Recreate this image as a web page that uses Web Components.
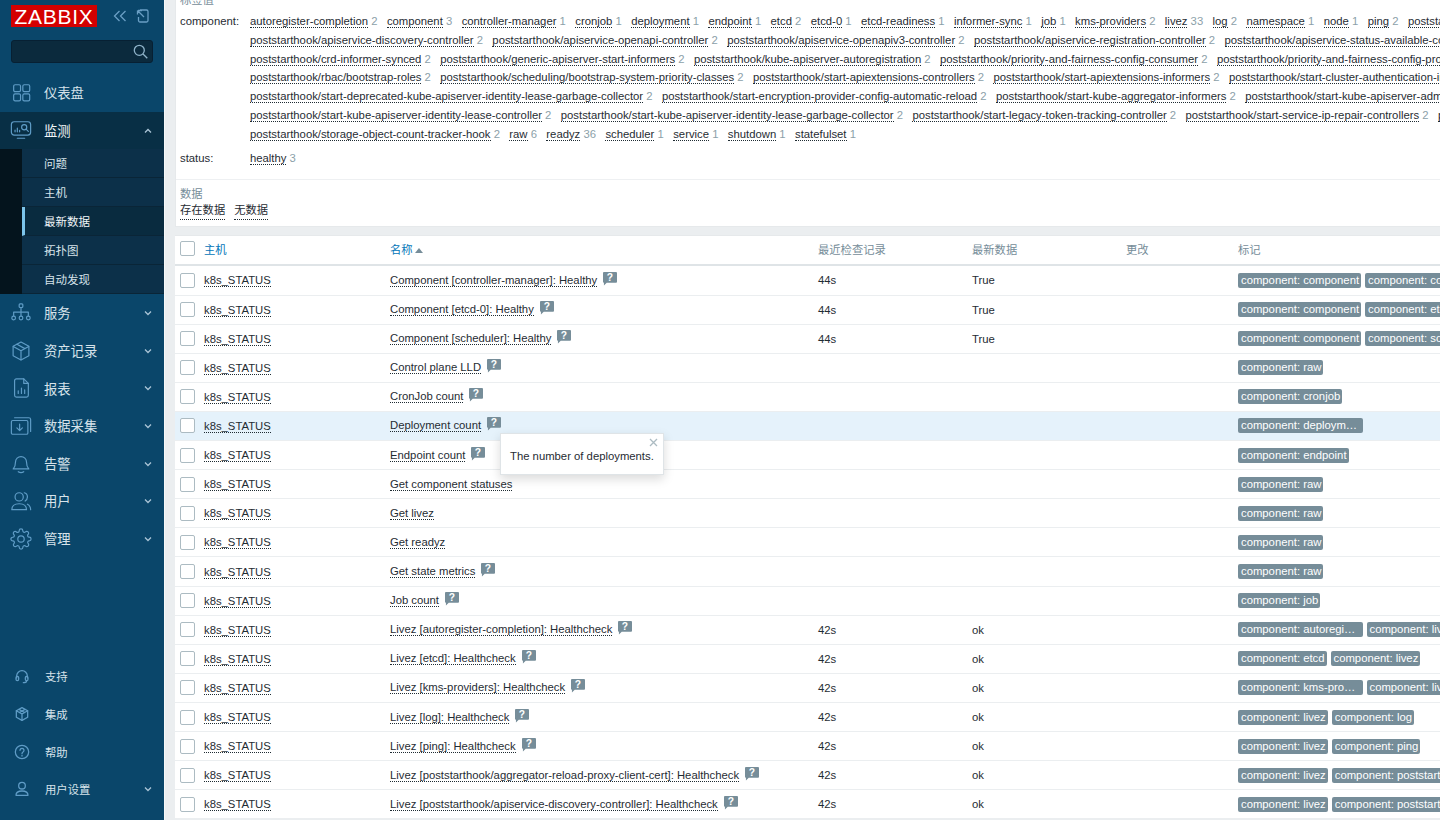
<!DOCTYPE html>
<html>
<head>
<meta charset="utf-8">
<title>Zabbix</title>
<style>
  html, body { margin: 0; padding: 0; height: 820px; overflow: hidden; background: #ebeef0; }
  body { display: flex; font: 11.3px "Liberation Sans", "Noto Sans CJK SC", Arial, sans-serif; color: #1f2c33; }
</style>
</head>
<body>
<z-sidebar></z-sidebar>
<z-main>
  <z-filter></z-filter>
  <z-table></z-table>
  <z-hint>The number of deployments.</z-hint>
</z-main>

<script>
const FONT = `"Liberation Sans", "Noto Sans CJK SC", Arial, sans-serif`;

const ICONS = {
  dashboard: `<rect x="4" y="3" width="7.5" height="7.5" rx="1.5"/><rect x="14" y="3" width="7.5" height="7.5" rx="1.5"/><rect x="4" y="13" width="7.5" height="7.5" rx="1.5"/><rect x="14" y="13" width="7.5" height="7.5" rx="1.5"/>`,
  monitor: `<rect x="1.5" y="3" width="21" height="14.5" rx="3"/><path d="M8 21h8M5.5 14v-2M8 14v-4M10.5 14v-1.5"/><circle cx="15.5" cy="9" r="2.8"/><path d="M17.5 11l2.5 2.5"/>`,
  services: `<rect x="10" y="2" width="4" height="4" rx="1"/><path d="M12 6v5M4 15v-4h16v4M12 11v4"/><rect x="2" y="15.5" width="4" height="4" rx="2"/><rect x="10" y="15.5" width="4" height="4" rx="2"/><rect x="18" y="15.5" width="4" height="4" rx="2"/>`,
  box: `<path d="M12 2.2l8.6 4.7v10.2L12 21.8l-8.6-4.7V6.9z"/><path d="M3.6 7l8.4 4.8L20.4 7M12 11.8v9.8M7.6 4.6l8.6 4.8"/>`,
  report: `<path d="M7 2h8l5 5v13a2 2 0 0 1-2 2H7a2 2 0 0 1-2-2V4a2 2 0 0 1 2-2z"/><path d="M15 2v5h5M9 18v-3M12.5 18v-6M16 18v-4"/>`,
  collect: `<rect x="1.5" y="6" width="18" height="15" rx="1.5"/><path d="M5 3h15.5A2 2 0 0 1 22.5 5v13M10.5 10v7M7.5 14l3 3 3-3"/>`,
  bell: `<path d="M3.5 18.5c2-2 2.5-3.5 2.5-7.5a6 6 0 0 1 12 0c0 4 .5 5.5 2.5 7.5z"/><path d="M9 21.5c1.5 1 4.5 1 6 0"/>`,
  users: `<circle cx="10" cy="7.5" r="4.5"/><path d="M2 21.5c0-4 3-6.5 8-6.5s8 2.5 8 6.5zM15.5 3c2.5.5 3.5 2.5 3.5 4.5s-1 3.5-2.5 4.5M19 15.5c2 1 3.5 3 3.5 6"/>`,
  gear: `<circle cx="12" cy="12" r="3.5"/><path d="M19.4 15a1.65 1.65 0 0 0 .33 1.82l.06.06a2 2 0 0 1 0 2.83 2 2 0 0 1-2.83 0l-.06-.06a1.65 1.65 0 0 0-1.82-.33 1.65 1.65 0 0 0-1 1.51V21a2 2 0 0 1-2 2 2 2 0 0 1-2-2v-.09A1.65 1.65 0 0 0 9 19.4a1.65 1.65 0 0 0-1.82.33l-.06.06a2 2 0 0 1-2.83 0 2 2 0 0 1 0-2.83l.06-.06a1.65 1.65 0 0 0 .33-1.82 1.65 1.65 0 0 0-1.51-1H3a2 2 0 0 1-2-2 2 2 0 0 1 2-2h.09A1.65 1.65 0 0 0 4.6 9a1.65 1.65 0 0 0-.33-1.82l-.06-.06a2 2 0 0 1 0-2.83 2 2 0 0 1 2.83 0l.06.06a1.65 1.65 0 0 0 1.82.33H9a1.65 1.65 0 0 0 1-1.51V3a2 2 0 0 1 2-2 2 2 0 0 1 2 2v.09a1.65 1.65 0 0 0 1 1.51 1.65 1.65 0 0 0 1.82-.33l.06-.06a2 2 0 0 1 2.83 0 2 2 0 0 1 0 2.83l-.06.06a1.65 1.65 0 0 0-.33 1.82V9a1.65 1.65 0 0 0 1.51 1H21a2 2 0 0 1 2 2 2 2 0 0 1-2 2h-.09a1.65 1.65 0 0 0-1.51 1z"/>`,
  headset: `<path d="M4 15v-3a8 8 0 0 1 16 0v3"/><rect x="3" y="12.5" width="4" height="6.5" rx="2"/><rect x="17" y="12.5" width="4" height="6.5" rx="2"/><path d="M19 19c0 2-2 3-5 3"/>`,
  cube: `<path d="M12 2.5l8.5 4.7v9.6L12 21.5l-8.5-4.7V7.2z"/><path d="M3.5 7.2L12 12l8.5-4.8M12 12v9.5M7.5 5l8.5 4.8M16.5 5L8 9.8"/>`,
  help: `<circle cx="12" cy="12" r="10"/><path d="M9 9.5a3 3 0 1 1 4.5 2.6c-1 .6-1.5 1.2-1.5 2.4M12 17v1"/>`,
  user: `<circle cx="12" cy="7" r="5"/><path d="M3 21.5c0-4.5 3-6.5 9-6.5s9 2 9 6.5z"/>`
};

class ZNavItem extends HTMLElement {
  constructor() {
    super();
    this.attachShadow({mode: "open"});
  }
  connectedCallback() {
    const small = this.hasAttribute("small");
    const size = small ? 16 : 22;
    const open = this.hasAttribute("open");
    let chevron = "";
    if (this.hasAttribute("chevron")) {
      chevron = `<svg class="chev" width="8" height="6" viewBox="0 0 8 6"><path d="${open ? "M1 4.5l3-3 3 3" : "M1 1.5l3 3 3-3"}"/></svg>`;
    }
    this.shadowRoot.innerHTML = `
      <style>
        :host { display: flex; align-items: center; height: 37.6px; position: relative; color: #d7e3ea; flex: none; }
        :host([open]) { background: #082f45; color: #f2f6f8; }
        .ico { width: 44px; flex: none; display: flex; justify-content: center; padding-right: ${small ? 0 : 3}px; box-sizing: border-box; }
        .ico svg { fill: none; stroke: #5f9cc6; stroke-width: ${small ? 1.9 : 1.3}; stroke-linecap: round; stroke-linejoin: round; }
        .chev { position: absolute; left: 144px; top: 16px; fill: none; stroke: #a9c4d6; stroke-width: 1.3; }
        .t { font-size: 13.3px; }
        :host([small]) .t { font-size: 11.33px; padding-left: 1px; }
      </style>
      <span class="ico"><svg width="${size}" height="${size}" viewBox="0 0 24 24">${ICONS[this.getAttribute("icon")]}</svg></span>
      <span class="t"><slot></slot></span>
      ${chevron}`;
  }
}
customElements.define("z-nav-item", ZNavItem);

class ZSubItem extends HTMLElement {
  constructor() {
    super();
    this.attachShadow({mode: "open"}).innerHTML = `
      <style>
        :host { display: flex; align-items: center; height: 29px; box-sizing: border-box; padding-left: 22px; background: #0c3049; border-bottom: 1px solid #0a2537; color: #d7e3ea; font-size: 11.5px; }
        :host([active]) { background: #092b3f; color: #f2f6f8; border-left: 3px solid #7cc4ea; padding-left: 19px; }
      </style>
      <slot></slot>`;
  }
}
customElements.define("z-sub-item", ZSubItem);

class ZSidebar extends HTMLElement {
  constructor() {
    super();
    this.attachShadow({mode: "open"}).innerHTML = `
      <style>
        :host { display: flex; flex-direction: column; width: 164px; height: 820px; flex: none; background: #0a466a; border-right: 1px solid #f6f8f9; box-sizing: content-box; font-family: ${FONT}; }
        .top { display: flex; align-items: center; padding: 5px 0 0 11px; height: 22px; }
        .logo { width: 86px; height: 22px; background: #d40000; color: #fff; font-size: 21px; line-height: 23px; text-align: center; letter-spacing: .7px; overflow: hidden; }
        .top svg { fill: none; stroke: #6a9fc5; stroke-width: 1.3; margin-left: 16px; }
        .top svg + svg { margin-left: 9px; }
        .search { margin: 13px 0 11px 11px; width: 142px; height: 23px; box-sizing: border-box; background: #0b2a3d; border: 1px solid #072033; border-radius: 3px; display: flex; justify-content: flex-end; align-items: center; padding-right: 4px; }
        .search svg { fill: none; stroke: #8fb3c9; stroke-width: 1.3; }
        .sub { display: flex; flex-direction: column; background: #04141d; padding-left: 22px; }
        .grow { flex: 1; }
        .bottom { padding-bottom: 12px; }
      </style>
      <div class="top">
        <div class="logo">ZABBIX</div>
        <svg width="14" height="14" viewBox="0 0 14 14"><path d="M6.5 2L1.5 7l5 5M12.5 2l-5 5 5 5"/></svg>
        <svg width="13" height="14" viewBox="0 0 13 14"><path d="M4 1h6.5A1.5 1.5 0 0 1 12 2.5v9a1.5 1.5 0 0 1-1.5 1.5H4A1.5 1.5 0 0 1 2.5 11.5V8M1.5 1.5L8 8M2 1.5h4M1.5 1.5v4"/></svg>
      </div>
      <div class="search"><svg width="15" height="15" viewBox="0 0 15 15"><circle cx="6.3" cy="6.3" r="5"/><path d="M10 10l4.3 4.3"/></svg></div>
      <z-nav-item icon="dashboard">仪表盘</z-nav-item>
      <z-nav-item icon="monitor" chevron open>监测</z-nav-item>
      <div class="sub">
        <z-sub-item>问题</z-sub-item>
        <z-sub-item>主机</z-sub-item>
        <z-sub-item active>最新数据</z-sub-item>
        <z-sub-item>拓扑图</z-sub-item>
        <z-sub-item>自动发现</z-sub-item>
      </div>
      <z-nav-item icon="services" chevron>服务</z-nav-item>
      <z-nav-item icon="box" chevron>资产记录</z-nav-item>
      <z-nav-item icon="report" chevron>报表</z-nav-item>
      <z-nav-item icon="collect" chevron>数据采集</z-nav-item>
      <z-nav-item icon="bell" chevron>告警</z-nav-item>
      <z-nav-item icon="users" chevron>用户</z-nav-item>
      <z-nav-item icon="gear" chevron>管理</z-nav-item>
      <div class="grow"></div>
      <div class="bottom">
        <z-nav-item small icon="headset">支持</z-nav-item>
        <z-nav-item small icon="cube">集成</z-nav-item>
        <z-nav-item small icon="help">帮助</z-nav-item>
        <z-nav-item small icon="user" chevron>用户设置</z-nav-item>
      </div>`;
  }
}
customElements.define("z-sidebar", ZSidebar);

class ZMain extends HTMLElement {
  constructor() {
    super();
    this.attachShadow({mode: "open"}).innerHTML = `
      <style>
        :host { display: flex; flex-direction: column; flex: 1; min-width: 0; height: 820px; overflow: hidden; position: relative; padding-left: 10px; gap: 8px; box-sizing: border-box; }
      </style>
      <slot></slot>`;
  }
}
customElements.define("z-main", ZMain);

const P = "poststarthook/";
const SUBFILTER = [
  [["autoregister-completion",2],["component",3],["controller-manager",1],["cronjob",1],["deployment",1],["endpoint",1],["etcd",2],["etcd-0",1],["etcd-readiness",1],["informer-sync",1],["job",1],["kms-providers",2],["livez",33],["log",2],["namespace",1],["node",1],["ping",2],[P+"aggregator-reload-proxy-client-cert",2]],
  [[P+"apiservice-discovery-controller",2],[P+"apiservice-openapi-controller",2],[P+"apiservice-openapiv3-controller",2],[P+"apiservice-registration-controller",2],[P+"apiservice-status-available-controller",2]],
  [[P+"crd-informer-synced",2],[P+"generic-apiserver-start-informers",2],[P+"kube-apiserver-autoregistration",2],[P+"priority-and-fairness-config-consumer",2],[P+"priority-and-fairness-config-producer",2]],
  [[P+"rbac/bootstrap-roles",2],[P+"scheduling/bootstrap-system-priority-classes",2],[P+"start-apiextensions-controllers",2],[P+"start-apiextensions-informers",2],[P+"start-cluster-authentication-info-controller",2]],
  [[P+"start-deprecated-kube-apiserver-identity-lease-garbage-collector",2],[P+"start-encryption-provider-config-automatic-reload",2],[P+"start-kube-aggregator-informers",2],[P+"start-kube-apiserver-admission-initializer",2]],
  [[P+"start-kube-apiserver-identity-lease-controller",2],[P+"start-kube-apiserver-identity-lease-garbage-collector",2],[P+"start-legacy-token-tracking-controller",2],[P+"start-service-ip-repair-controllers",2],[P+"start-system-namespaces-controller",2]],
  [[P+"storage-object-count-tracker-hook",2],["raw",6],["readyz",36],["scheduler",1],["service",1],["shutdown",1],["statefulset",1]]
];

class ZFilter extends HTMLElement {
  constructor() {
    super();
    this.attachShadow({mode: "open"});
  }
  line(items) {
    return `<div class="line">` + items.map(i => `<span class="it"><a>${i[0]}</a> <i>${i[1]}</i></span>`).join("") + `</div>`;
  }
  connectedCallback() {
    this.shadowRoot.innerHTML = `
      <style>
        :host { display: block; flex: none; margin-top: -8px; background: #fff; border: 1px solid #e6e9eb; border-right: 0; box-sizing: border-box; height: 235px; color: #1f2c33; font-family: ${FONT}; }
        .cap { color: #768d99; line-height: 14px; padding-left: 4px; height: 19px; }
        .grp { display: grid; grid-template-columns: 70px 1fr; padding-left: 4px; margin-bottom: 5px; }
        .line { height: 18.83px; line-height: 18px; white-space: nowrap; overflow: hidden; width: 1200px; }
        .it { margin-right: 9.4px; }
        a { border-bottom: 1px dotted #1f2c33; }
        i { font-style: normal; color: #8c9fa9; }
        .k { line-height: 18px; }
        .sep { border-top: 1px solid #eef0f2; margin-top: 11px; padding: 7px 0 0 4px; }
        .sep .c { color: #768d99; line-height: 14px; }
        .sep .l { display: flex; gap: 9px; margin-top: 3px; }
        .sep .l a { line-height: 13px; display: inline-block; height: 15px; }
      </style>
      <div class="cap">标签值</div>
      <div class="grp"><div class="k">component:</div><div>${SUBFILTER.map(l => this.line(l)).join("")}</div></div>
      <div class="grp" style="margin:0"><div class="k">status:</div><div>${this.line([["healthy",3]])}</div></div>
      <div class="sep">
        <div class="c">数据</div>
        <div class="l"><a>存在数据</a><a>无数据</a></div>
      </div>`;
  }
}
customElements.define("z-filter", ZFilter);

class ZTag extends HTMLElement {
  constructor() {
    super();
    this.attachShadow({mode: "open"}).innerHTML = `
      <style>
        :host { display: inline-block; flex: none; box-sizing: border-box; background: #768d99; color: #fff; height: 15px; line-height: 15px; padding: 0 2px 0 3px; border-radius: 2px; white-space: nowrap; }
        :host([cut]) { width: 124.5px; }
      </style>
      <slot></slot>`;
  }
}
customElements.define("z-tag", ZTag);

const HELP_ICON = `<svg class="help" width="14" height="14" viewBox="0 0 15 15"><path fill="#768d99" d="M1 0h13a1 1 0 0 1 1 1v9.5a1 1 0 0 1-1 1H4L1 14.5V11.5A1 1 0 0 1 0 10.5V1a1 1 0 0 1 1-1z"/><text x="7.5" y="9.8" text-anchor="middle" fill="#fff" font-size="11" font-weight="bold" font-family="Liberation Sans">?</text></svg>`;

class ZRow extends HTMLElement {
  constructor() {
    super();
    this.attachShadow({mode: "open"});
  }
  connectedCallback() {
    const d = this.data;
    const tags = d.tags.map(t => `<z-tag${t.endsWith("…") ? " cut" : ""}>${t}</z-tag>`).join("");
    this.shadowRoot.innerHTML = `
      <style>${ZRow.css}</style>
      <span class="cb"></span>
      <span><a>k8s_STATUS</a></span>
      <span class="name"><a>${d.name}</a>${d.help ? HELP_ICON : ""}</span>
      <span>${d.age || ""}</span>
      <span>${d.val || ""}</span>
      <span></span>
      <span class="tags">${tags}</span>`;
  }
}
ZRow.css = `
  :host { display: grid; grid-template-columns: 24px 186px 428px 154px 154px 112px 1fr; align-items: center; height: 29.11px; box-sizing: border-box; padding-left: 5px; background: #fff; border-bottom: 1px solid #ebeef0; white-space: nowrap; overflow: hidden; }
  :host([hover]) { background: #e5f2fb; }
  .cb { width: 15px; height: 15px; box-sizing: border-box; background: #fff; border: 1px solid #acbbc2; border-radius: 2px; }
  a { border-bottom: 1px dotted #1f2c33; }
  .name { display: flex; align-items: center; }
  .help { margin-left: 6px; margin-top: -3px; }
  .tags { display: flex; gap: 4px; overflow: hidden; }`;
customElements.define("z-row", ZRow);

const CC = "component: component";
const ROWS = [
  {name:"Component [controller-manager]: Healthy",help:1,age:"44s",val:"True",tags:[CC,"component: controller-manager"]},
  {name:"Component [etcd-0]: Healthy",help:1,age:"44s",val:"True",tags:[CC,"component: etcd-0"]},
  {name:"Component [scheduler]: Healthy",help:1,age:"44s",val:"True",tags:[CC,"component: scheduler"]},
  {name:"Control plane LLD",help:1,tags:["component: raw"]},
  {name:"CronJob count",help:1,tags:["component: cronjob"]},
  {name:"Deployment count",help:1,hover:1,tags:["component: deploym…"]},
  {name:"Endpoint count",help:1,tags:["component: endpoint"]},
  {name:"Get component statuses",tags:["component: raw"]},
  {name:"Get livez",tags:["component: raw"]},
  {name:"Get readyz",tags:["component: raw"]},
  {name:"Get state metrics",help:1,tags:["component: raw"]},
  {name:"Job count",help:1,tags:["component: job"]},
  {name:"Livez [autoregister-completion]: Healthcheck",help:1,age:"42s",val:"ok",tags:["component: autoregi…","component: livez"]},
  {name:"Livez [etcd]: Healthcheck",help:1,age:"42s",val:"ok",tags:["component: etcd","component: livez"]},
  {name:"Livez [kms-providers]: Healthcheck",help:1,age:"42s",val:"ok",tags:["component: kms-pro…","component: livez"]},
  {name:"Livez [log]: Healthcheck",help:1,age:"42s",val:"ok",tags:["component: livez","component: log"]},
  {name:"Livez [ping]: Healthcheck",help:1,age:"42s",val:"ok",tags:["component: livez","component: ping"]},
  {name:"Livez [poststarthook/aggregator-reload-proxy-client-cert]: Healthcheck",help:1,age:"42s",val:"ok",tags:["component: livez","component: poststarthook/aggregator"]},
  {name:"Livez [poststarthook/apiservice-discovery-controller]: Healthcheck",help:1,age:"42s",val:"ok",tags:["component: livez","component: poststarthook/apiservice"]}
];

class ZTable extends HTMLElement {
  constructor() {
    super();
    this.attachShadow({mode: "open"});
  }
  connectedCallback() {
    this.shadowRoot.innerHTML = `
      <style>
        :host { display: block; flex: none; color: #1f2c33; font-family: ${FONT}; border-top: 1px solid #e6e9eb; }
        .head { display: grid; grid-template-columns: 24px 186px 428px 154px 154px 112px 1fr; align-items: center; height: 30.4px; box-sizing: border-box; padding: 0 0 3px 5px; background: #fff; border-bottom: 2px solid #dfe4e7; color: #768d99; }
        .cb { width: 15px; height: 15px; box-sizing: border-box; background: #fff; border: 1px solid #acbbc2; border-radius: 2px; }
        .sort { color: #0275b8; }
        .tri { display: inline-block; width: 0; height: 0; border: 4px solid transparent; border-top: 0; border-bottom: 5px solid #768d99; margin-left: 2px; vertical-align: 1px; }
      </style>
      <div class="head">
        <span class="cb"></span>
        <span class="sort">主机</span>
        <span class="sort">名称<span class="tri"></span></span>
        <span>最近检查记录</span>
        <span>最新数据</span>
        <span>更改</span>
        <span>标记</span>
      </div>`;
    ROWS.forEach(r => {
      const row = document.createElement("z-row");
      row.data = r;
      if (r.hover) row.setAttribute("hover", "");
      this.shadowRoot.appendChild(row);
    });
  }
}
customElements.define("z-table", ZTable);

class ZHint extends HTMLElement {
  constructor() {
    super();
    this.attachShadow({mode: "open"}).innerHTML = `
      <style>
        :host { display: block; position: absolute; left: 335px; top: 433px; width: 164px; height: 42px; box-sizing: border-box; background: #fff; border: 1px solid #dfe4e7; box-shadow: 0 4px 10px rgba(0,0,0,.15); padding: 15px 0 0 9px; line-height: 14px; white-space: nowrap; font-family: ${FONT}; color: #1f2c33; }
        svg { position: absolute; right: 5px; top: 4px; stroke: #acbbc2; stroke-width: 1.3; fill: none; }
      </style>
      <svg width="9" height="9" viewBox="0 0 9 9"><path d="M1 1l7 7M8 1L1 8"/></svg>
      <slot></slot>`;
  }
}
customElements.define("z-hint", ZHint);
</script>
</body>
</html>
